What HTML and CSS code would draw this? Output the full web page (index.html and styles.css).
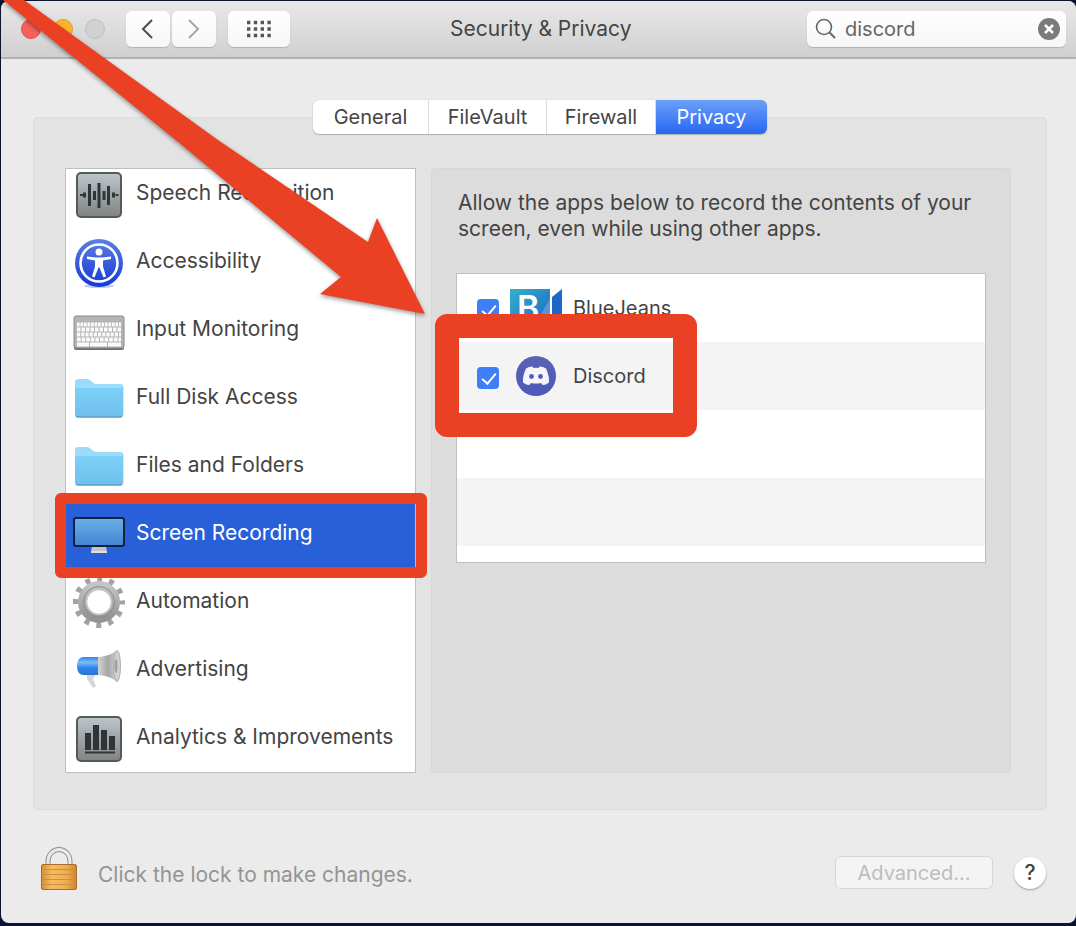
FILE: index.html
```
<!DOCTYPE html>
<html lang="en">
  <head>
    <meta charset="UTF-8">
    <meta name="viewport" content="width=device-width, initial-scale=1">
    <title>Security &amp; Privacy</title>
    <link rel="stylesheet" href="styles.css">
  </head>
  <body>
    <!-- shared gradients -->
    <svg class="defs" width="0" height="0" aria-hidden="true">
      <defs>
        <linearGradient id="steel" x1="0" y1="0" x2="0" y2="1"><stop offset="0" stop-color="#bcc6cb"/><stop offset="0.5" stop-color="#9ea4a5"/><stop offset="1" stop-color="#7f8384"/></linearGradient>
        <linearGradient id="folder" x1="0" y1="0" x2="0" y2="1"><stop offset="0" stop-color="#7dd0f7"/><stop offset="1" stop-color="#6fc0ec"/></linearGradient>
        <linearGradient id="access" x1="0" y1="0" x2="0" y2="1"><stop offset="0" stop-color="#5b80e2"/><stop offset="1" stop-color="#1438d8"/></linearGradient>
        <linearGradient id="screen" x1="0" y1="0" x2="0" y2="1"><stop offset="0" stop-color="#6cb0e6"/><stop offset="1" stop-color="#3f85d2"/></linearGradient>
        <linearGradient id="metal" x1="0" y1="0" x2="0" y2="1"><stop offset="0" stop-color="#c4c4c4"/><stop offset="1" stop-color="#939393"/></linearGradient>
        <linearGradient id="horn" x1="0" y1="0" x2="1" y2="0"><stop offset="0" stop-color="#d8d8d8"/><stop offset="0.5" stop-color="#a5a5a5"/><stop offset="1" stop-color="#dedede"/></linearGradient>
        <linearGradient id="grip" x1="0" y1="0" x2="0" y2="1"><stop offset="0" stop-color="#2e86e8"/><stop offset="0.3" stop-color="#7cbcfa"/><stop offset="0.6" stop-color="#2f86ee"/><stop offset="1" stop-color="#2a72d0"/></linearGradient>
        <linearGradient id="brass" x1="0" y1="0" x2="1" y2="0"><stop offset="0" stop-color="#d98f35"/><stop offset="0.3" stop-color="#f6bb60"/><stop offset="0.7" stop-color="#efae50"/><stop offset="1" stop-color="#cf8530"/></linearGradient>
        <linearGradient id="jeans" x1="0" y1="0" x2="1" y2="1"><stop offset="0" stop-color="#35b1cd"/><stop offset="1" stop-color="#1c62c4"/></linearGradient>
        <linearGradient id="blurple" x1="0" y1="0" x2="0" y2="1"><stop offset="0" stop-color="#5a62b4"/><stop offset="1" stop-color="#4d59b8"/></linearGradient>
      </defs>
    </svg>

    <div class="window">
      <header class="titlebar">
        <div class="lights">
          <span class="light light--close"></span>
          <span class="light light--minimize"></span>
          <span class="light light--zoom"></span>
        </div>
        <div class="nav-buttons">
          <button class="tool" type="button" aria-label="Back">
            <svg width="44" height="36" viewBox="0 0 44 36"><path d="M26 9 L17 18 L26 27" fill="none" stroke="#4c4c4c" stroke-width="2"/></svg>
          </button>
          <button class="tool" type="button" aria-label="Forward">
            <svg width="44" height="36" viewBox="0 0 44 36"><path d="M17 9 L26 18 L17 27" fill="none" stroke="#a6a6a6" stroke-width="2"/></svg>
          </button>
        </div>
        <button class="tool" type="button" aria-label="Show all">
          <svg width="62" height="36" viewBox="0 0 62 36"><path d="M19 11.500h24M19 18h24M19 24.500h24" fill="none" stroke="#555" stroke-width="3.400" stroke-dasharray="3.400 3.400"/></svg>
        </button>
        <h1 class="title">Security &amp; Privacy</h1>
        <div class="search">
          <svg width="22" height="22" viewBox="0 0 22 22" aria-hidden="true"><circle cx="9" cy="9" r="7.500" fill="none" stroke="#666" stroke-width="1.600"/><path d="M14.500 14.500 L20 20" stroke="#666" stroke-width="2"/></svg>
          <input class="search__input" type="text" aria-label="Search" value="discord">
          <button class="search__clear" type="button" aria-label="Clear">
            <svg width="22" height="22" viewBox="0 0 22 22"><circle cx="11" cy="11" r="11" fill="#7b7b7b"/><path d="M7 7l8 8M15 7l-8 8" stroke="#fff" stroke-width="2.500"/></svg>
          </button>
        </div>
      </header>

      <main class="panel">
        <div class="tabs">
          <button class="tab" type="button">General</button>
          <button class="tab" type="button">FileVault</button>
          <button class="tab" type="button">Firewall</button>
          <button class="tab tab--active" type="button">Privacy</button>
        </div>

        <div class="columns">
          <nav class="sidebar">
            <div class="sidebar__scroll">
              <a class="item" href="#">
                <svg class="item__icon" viewBox="0 0 52 52"><rect x="4" y="4" width="44" height="44" rx="4" fill="url(#steel)" stroke="#555a5c" stroke-width="2"/><path d="M8.500 25v2M11.500 23.500v5M16.500 15v22M21.500 22v9M26 14v25M31 22v9M35.500 17v19M40.500 23.500v5M44 25v2" stroke="#303638" stroke-width="3"/></svg>
                Speech Recognition
              </a>
              <a class="item" href="#">
                <svg class="item__icon" viewBox="0 0 52 52"><ellipse cx="26" cy="49" rx="15" ry="2" fill="#c5cbe8"/><circle cx="26" cy="26" r="24" fill="url(#access)"/><circle cx="26" cy="26" r="18.500" fill="none" stroke="#fff" stroke-width="2.600"/><circle cx="26" cy="15" r="3.500" fill="#fff"/><path d="M14 19.500l9 1h6l9-1v2.500l-8 1.500v6l3 10-2.500 1-4-10h-1l-4 10-2.500-1 3-10v-6l-8-1.500z" fill="#fff"/></svg>
                Accessibility
              </a>
              <a class="item" href="#">
                <svg class="item__icon" viewBox="0 0 52 52"><rect x="1" y="13" width="50" height="32" rx="2" fill="#6f6f6f"/><rect x="1" y="11" width="50" height="32" rx="2" fill="#b4b4b4" stroke="#8b8b8b"/><g stroke="#fbfbfb" stroke-width="3.800"><path d="M4 19.500h44" stroke-dasharray="2.700 0.800"/><path d="M4 24.500h44" stroke-dasharray="3.500 1"/><path d="M4 29.500h44" stroke-dasharray="3.200 1"/><path d="M4 34.500h44" stroke-dasharray="3.600 1"/><path d="M4 39.500h12M17 39.500h17M35 39.500h13"/></g></svg>
                Input Monitoring
              </a>
              <a class="item" href="#">
                <svg class="item__icon" viewBox="0 0 52 52"><path d="M2 9q0-3 3-3h9q2 0 3.500 1.500l3 2.500q1 1 3 1h24q3 0 3 3v27q0 3-3 3H5q-3 0-3-3z" fill="#9bdcf8"/><path d="M2 15h48v26q0 3-3 3H5q-3 0-3-3z" fill="url(#folder)"/><path d="M3 43q1 1 2 1h42q1 0 2-1" fill="none" stroke="#5a9fc4" stroke-width="1.500"/></svg>
                Full Disk Access
              </a>
              <a class="item" href="#">
                <svg class="item__icon" viewBox="0 0 52 52"><path d="M2 9q0-3 3-3h9q2 0 3.500 1.500l3 2.500q1 1 3 1h24q3 0 3 3v27q0 3-3 3H5q-3 0-3-3z" fill="#9bdcf8"/><path d="M2 15h48v26q0 3-3 3H5q-3 0-3-3z" fill="url(#folder)"/><path d="M3 43q1 1 2 1h42q1 0 2-1" fill="none" stroke="#5a9fc4" stroke-width="1.500"/></svg>
                Files and Folders
              </a>
              <a class="item item--selected" href="#">
                <svg class="item__icon" viewBox="0 0 52 52"><path d="M19 37h14l1 7H18z" fill="#c3c4c8"/><path d="M18 42h16v2H18z" fill="#e2dfdd"/><rect x="1" y="9" width="50" height="28" rx="2" fill="url(#screen)" stroke="#10223f" stroke-width="2"/></svg>
                Screen Recording
              </a>
              <a class="item" href="#">
                <svg class="item__icon" viewBox="0 0 52 52"><g fill="none" stroke="#a2a2a2"><circle cx="26" cy="25" r="23" stroke-width="6" stroke-dasharray="5 7.043" stroke-dashoffset="2.500"/><circle cx="26" cy="25" r="16.500" stroke="url(#metal)" stroke-width="9"/><circle cx="26" cy="25" r="15.500" stroke="#8c8c8c" stroke-width="1"/><circle cx="26" cy="25" r="12.500" stroke="#c8c8c8" stroke-width="1.500"/></g></svg>
                Automation
              </a>
              <a class="item" href="#">
                <svg class="item__icon" viewBox="0 0 52 52"><path d="M14 29h9l-3 5 3 7-3 2-6-9z" fill="#d5d5d5"/><path d="M24 12q12 0 20-7 4 16 0 32-8-7-20-7z" fill="url(#horn)"/><ellipse cx="44" cy="21" rx="3.500" ry="15.500" fill="#d0d0d0" stroke="#b0b0b0"/><ellipse cx="43" cy="21" rx="1.500" ry="7" fill="#a0a0a0"/><path d="M25 12v18H11q-7 0-7-9t7-9z" fill="url(#grip)"/></svg>
                Advertising
              </a>
              <a class="item" href="#">
                <svg class="item__icon" viewBox="0 0 52 52"><rect x="4" y="4" width="44" height="44" rx="4" fill="url(#steel)" stroke="#555a5c" stroke-width="2"/><path d="M12 20h6v17h-6zM20 12h6v25h-6zM28 17h6v20h-6zM36 23h6v14h-6zM12 38.500h30v2H12z" fill="#303436"/></svg>
                Analytics &amp; Improvements
              </a>
            </div>
            <div class="mark mark--row"></div>
          </nav>

          <section class="detail">
            <p class="detail__text">Allow the apps below to record the contents of your screen, even while using other apps.</p>
            <div class="apps">
              <div class="app">
                <input class="app__check" type="checkbox" id="bluejeans" checked>
                <label class="app__label" for="bluejeans">
                  <svg class="app__icon" viewBox="0 0 54 48"><rect x="1" y="5" width="40" height="40" fill="url(#jeans)"/><path d="M41 14v31H24z" fill="#5b93d8"/><path d="M43 13l10-8v40l-10-8z" fill="#1e66c8"/><text class="app__letter" x="8" y="36">B</text></svg>
                  BlueJeans
                </label>
              </div>
              <div class="app">
                <input class="app__check" type="checkbox" id="discord" checked>
                <label class="app__label" for="discord">
                  <svg class="app__icon" viewBox="0 0 54 48"><circle cx="27" cy="24" r="20" fill="url(#blurple)"/><path d="M17 16.500q3-2 6.500-2l1 1.500q2.500-.5 5 0l1-1.500q3.500 0 6.500 2 3.500 7.500 3 14-3 2.500-6.500 2.500L32 31q-5 1-10 0l-1.500 2q-3.500 0-6.500-2.500-.5-6.500 3-14z" fill="#f4f4fb"/><circle cx="22.500" cy="24.500" r="2.400" fill="#525cb6"/><circle cx="31.500" cy="24.500" r="2.400" fill="#525cb6"/></svg>
                  Discord
                </label>
              </div>
              <div class="app"></div>
              <div class="app"></div>
              <div class="app app--last"></div>
              <div class="mark mark--app"></div>
            </div>
          </section>
        </div>
      </main>

      <footer class="footer">
        <svg width="38" height="44" viewBox="0 0 38 44" aria-hidden="true"><path d="M8 20v-6a11 11.500 0 0 1 22 0v6" fill="none" stroke="#8f8f8f" stroke-width="5"/><path d="M8 20v-6a11 11.500 0 0 1 22 0v6" fill="none" stroke="#e9e9e9" stroke-width="3"/><rect x="1.500" y="17.500" width="35" height="25" rx="1.500" fill="url(#brass)" stroke="#a86c2c"/><path d="M2 22.500h34M2 27.500h34M2 32.500h34M2 37.500h34" stroke="#cf8e3d"/></svg>
        <span class="footer__text">Click the lock to make changes.</span>
        <button class="advanced" type="button" disabled>Advanced...</button>
        <button class="help" type="button" aria-label="Help">?</button>
      </footer>
    </div>

    <svg class="arrow" width="440" height="330" viewBox="0 0 440 330" aria-hidden="true">
      <path d="M3 0H24L218 140L368 242L377 218L425 314L320 294L341 277L177 141L3 0z" fill="#ea4023"/>
    </svg>
  </body>
</html>
```
FILE: styles.css
```
* {
  box-sizing: border-box;
}
body {
  margin: 0;
  min-height: 100vh;
  padding: 1px 0 3px 1px;
  background: #0b1533;
  color: #444;
  font-family: Inter, "Liberation Sans", sans-serif;
  font-size: 20px;
  line-height: 26px;
}
button, input {
  font: inherit;
  color: inherit;
  margin: 0;
  padding: 0;
  border: none;
}
svg {
  display: block;
  flex: none;
}
.defs {
  position: absolute;
}
.window {
  min-height: calc(100vh - 4px);
  background: #ebebeb;
  border-radius: 8px;
  overflow: hidden;
}

/* title bar */
.titlebar {
  display: flex;
  align-items: center;
  height: 58px;
  padding: 0 10px 0 20px;
  background: linear-gradient(#e8e8e8, #d0d0d0);
  border-bottom: 2px solid #b2b2b2;
}
.lights {
  display: flex;
  gap: 12px;
  margin-right: 21px;
}
.light {
  width: 20px;
  height: 20px;
  border-radius: 50%;
  border: 1px solid #bdbfc0;
  background: #cfd1d2;
}
.light--close {
  background: #f9605c;
  border-color: #df4e4a;
}
.light--minimize {
  background: #fbb42d;
  border-color: #dd9d2c;
}
.nav-buttons {
  display: flex;
  gap: 2px;
  margin-right: 12px;
}
.tool {
  height: 36px;
  border-radius: 6px;
  background: linear-gradient(#fff, #f6f6f6);
  box-shadow: 0 1px 1px #b0b0b0;
}
.title {
  flex: 1;
  margin: 0;
  padding-left: 160px;
  font-size: 21px;
  font-weight: 400;
}
.search {
  display: flex;
  align-items: center;
  gap: 8px;
  width: 259px;
  height: 36px;
  padding: 0 6px 0 8px;
  border-radius: 6px;
  background: linear-gradient(#fff, #f6f6f6);
  box-shadow: 0 1px 1px #b0b0b0;
}
.search__input {
  flex: 1;
  min-width: 0;
  background: none;
  color: #666;
}
.search__clear {
  border-radius: 50%;
  background: none;
}

/* panel */
.panel {
  margin: 58px 29px 0 32px;
  padding: 0 35px 36px 31px;
  background: #e3e3e3;
  border: 1px solid #dcdcdc;
  border-radius: 4px;
}
.tabs {
  display: grid;
  grid-template-columns: 116px 118px 109px 111px;
  width: 454px;
  margin: -18px auto 34px 248px;
  border-radius: 6px;
  background: #fff;
  box-shadow: 0 1px 1px #b0b0b0, 0 0 1px #b0b0b0;
}
.tab {
  height: 34px;
  background: none;
  border-right: 1px solid #ddd;
}
.tab--active {
  border: none;
  border-radius: 0 6px 6px 0;
  background: linear-gradient(#6aa0f8, #2866f2);
  color: #fff;
}
.columns {
  display: flex;
  gap: 15px;
}
.sidebar {
  position: relative;
  flex: none;
  width: 351px;
}
.sidebar__scroll {
  height: 605px;
  overflow: hidden;
  background: #fff;
  border: 1px solid #bfbfbf;
}
.item {
  display: flex;
  align-items: center;
  gap: 11px;
  height: 68px;
  padding: 0 7px;
  color: #444;
  font-size: 21px;
  text-decoration: none;
  white-space: nowrap;
}
.item:first-child {
  margin-top: -10px;
}
.item--selected {
  background: #2860da;
  color: #fff;
}
.item__icon {
  width: 52px;
  height: 52px;
  margin-top: 4px;
}
.detail {
  flex: 1;
  padding: 21px 24px;
  background: #dcdcdc;
  border: 1px solid #d7d7d7;
  border-radius: 4px;
}
.detail__text {
  margin: 0 0 31px 2px;
  font-size: 21px;
}
.apps {
  position: relative;
  background: #fff;
  border: 1px solid #bfbfbf;
}
.app {
  display: flex;
  align-items: center;
  gap: 10px;
  height: 68px;
  padding-left: 20px;
}
.app:nth-child(even) {
  background: #f4f4f4;
}
.app--last {
  height: 16px;
}
.app__check {
  position: relative;
  width: 22px;
  height: 22px;
  margin-top: 3px;
  border-radius: 4px;
  background: #3f7ff5;
  appearance: none;
}
.app__check:checked::after {
  content: "";
  position: absolute;
  left: 8px;
  top: 3px;
  width: 6px;
  height: 12px;
  border: solid #fff;
  border-width: 0 2px 2px 0;
  transform: rotate(40deg);
}
.app__label {
  display: flex;
  align-items: center;
  gap: 10px;
}
.app__icon {
  width: 54px;
  height: 48px;
}
.app__letter {
  fill: #fff;
  font-size: 34px;
  font-weight: 600;
}

/* red call-outs */
.mark {
  position: absolute;
  border: 11px solid #ea4023;
  border-radius: 6px;
}
.mark--row {
  left: -10px;
  right: -11px;
  top: 325px;
  height: 85px;
}
.mark--app {
  left: -22px;
  top: 40px;
  width: 262px;
  height: 123px;
  border-width: 24px;
  border-radius: 12px;
}
.arrow {
  position: absolute;
  left: 0;
  top: 0;
  filter: drop-shadow(0 2px 2px rgba(0, 0, 0, 0.4));
  pointer-events: none;
}

/* footer */
.footer {
  display: flex;
  align-items: flex-end;
  padding: 37px 30px 30px 39px;
}
.footer__text {
  flex: 1;
  padding-left: 20px;
  color: #949494;
  font-size: 21px;
  line-height: 32px;
}
.advanced {
  width: 158px;
  height: 33px;
  margin: 0 21px 2px 0;
  border: 1px solid #d5d5d5;
  border-radius: 6px;
  background: #f4f4f4;
  color: #bdbdbd;
}
.help {
  width: 32px;
  height: 32px;
  margin-bottom: 2px;
  border-radius: 50%;
  background: #fff;
  box-shadow: 0 1px 2px #999;
  font-size: 21px;
  font-weight: 500;
}
```
